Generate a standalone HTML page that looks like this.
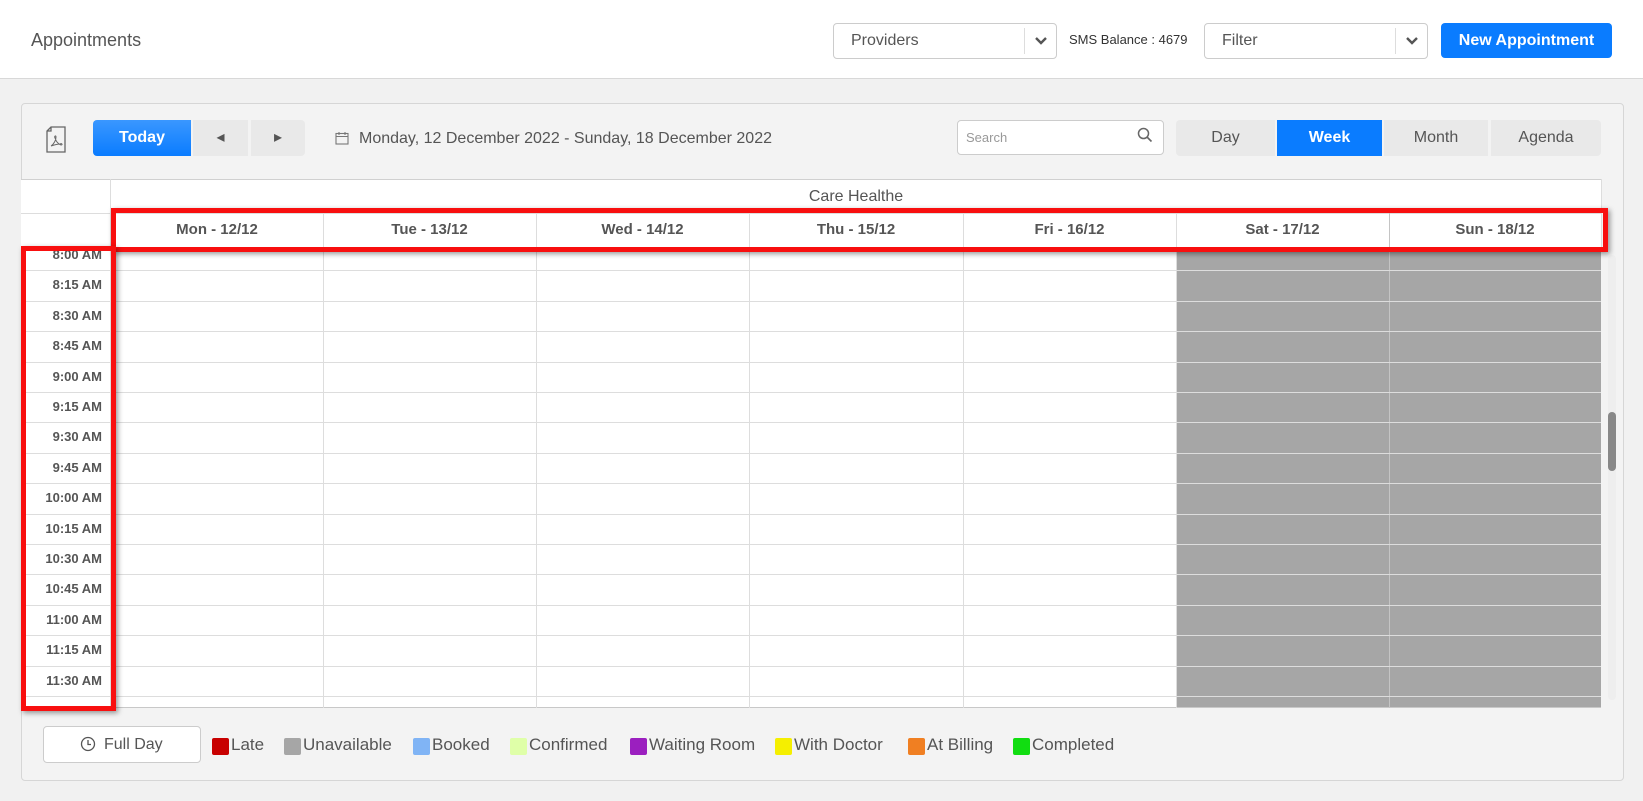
<!DOCTYPE html>
<html><head><meta charset="utf-8"><style>
*{box-sizing:border-box;margin:0;padding:0}
body{width:1643px;height:801px;overflow:hidden;background:#f1f1f1;font-family:"Liberation Sans",Arial,sans-serif;color:#555;position:relative}
.abs{position:absolute}
.hdr{left:0;top:0;width:1643px;height:79px;background:#fff;border-bottom:1px solid #d8d8d8}
.sel{background:#fff;border:1px solid #ccc;border-radius:4px;font-size:16px;color:#555;padding-left:17px;line-height:34px}
.sel .sep{position:absolute;top:4px;bottom:4px;width:1px;background:#ddd}
.btn{background:#e9e9e9;border-radius:3px;font-size:16px;text-align:center;line-height:36px;color:#555}
.tl{width:89px;text-align:right;padding-right:8px;font-weight:bold;font-size:13px;color:#555}
.dh{font-weight:bold;font-size:15px;color:#555;text-align:center;line-height:34px}
.lg{font-size:17px;color:#555;top:735px;line-height:20px}
.sq{width:17px;height:17px;border-radius:2px;top:738px}
</style></head><body>
<div class="abs hdr"></div>
<div class="abs" style="left:31px;top:30px;font-size:18px;color:#555">Appointments</div>
<div class="abs sel" style="left:833px;top:23px;width:224px;height:36px">Providers<div class="sep" style="left:190px"></div>
<svg class="abs" style="left:200px;top:12px" width="14" height="10" viewBox="0 0 14 10"><path d="M2 2l5 5 5-5" stroke="#555" stroke-width="2.4" fill="none"/></svg></div>
<div class="abs" style="left:1069px;top:32px;font-size:13px;color:#333">SMS Balance : 4679</div>
<div class="abs sel" style="left:1204px;top:23px;width:224px;height:36px">Filter<div class="sep" style="left:190px"></div>
<svg class="abs" style="left:200px;top:12px" width="14" height="10" viewBox="0 0 14 10"><path d="M2 2l5 5 5-5" stroke="#555" stroke-width="2.4" fill="none"/></svg></div>
<div class="abs" style="left:1441px;top:23px;width:171px;height:35px;background:#0a7cff;border-radius:4px;color:#fff;font-weight:bold;font-size:16px;text-align:center;line-height:35px">New Appointment</div>

<div class="abs" style="left:21px;top:103px;width:1603px;height:678px;background:#f3f3f3;border:1px solid #d6d6d6;border-radius:4px"></div>
<svg class="abs" style="left:45px;top:126px" width="22" height="27" viewBox="0 0 22 27"><path d="M6 1h14v25H2V5z M6 1v4H2" fill="none" stroke="#666" stroke-width="1.3"/><path d="M6 20c3-2 5-6 5-9 0-2-2-1-1 1 1 3 3 6 6 7 2 0 1-2-1-1-3 0-6 1-9 2" fill="none" stroke="#666" stroke-width="1"/></svg>
<div class="abs" style="left:93px;top:120px;width:98px;height:36px;background:linear-gradient(#3a97ff,#0a7cff);border-radius:4px 0 0 4px;color:#fff;font-weight:bold;font-size:16px;text-align:center;line-height:36px">Today</div>
<div class="abs btn" style="left:193px;top:120px;width:55px;height:36px;border-radius:0">◂</div>
<div class="abs btn" style="left:251px;top:120px;width:54px;height:36px;border-radius:0 4px 4px 0">▸</div>
<svg class="abs" style="left:335px;top:131px" width="14" height="14" viewBox="0 0 14 14"><rect x="1" y="2.5" width="12" height="10.5" fill="none" stroke="#777" stroke-width="1.1"/><path d="M1 5.5h12M4 1v3M10 1v3" stroke="#777" stroke-width="1.1"/></svg>
<div class="abs" style="left:359px;top:130px;font-size:16px;color:#555">Monday, 12 December 2022 - Sunday, 18 December 2022</div>
<div class="abs" style="left:957px;top:120px;width:207px;height:35px;background:#fff;border:1px solid #ccc;border-radius:4px;font-size:13px;color:#999;padding-left:8px;line-height:33px">Search</div>
<svg class="abs" style="left:1137px;top:127px" width="16" height="16" viewBox="0 0 16 16"><circle cx="6.5" cy="6.5" r="5" fill="none" stroke="#666" stroke-width="1.5"/><path d="M10 10l4.5 4.5" stroke="#666" stroke-width="1.6"/></svg>
<div class="abs btn" style="left:1176px;top:120px;width:99px;height:36px;border-radius:4px 0 0 4px">Day</div>
<div class="abs btn" style="left:1277px;top:120px;width:105px;height:36px;background:#0a7cff;color:#fff;font-weight:bold;border-radius:0">Week</div>
<div class="abs btn" style="left:1384px;top:120px;width:104px;height:36px;border-radius:0">Month</div>
<div class="abs btn" style="left:1491px;top:120px;width:110px;height:36px;border-radius:0 4px 4px 0">Agenda</div>

<div class="abs" style="left:21px;top:179px;width:1580px;height:529px;background:#fff;border-top:1px solid #d0d0d0;border-bottom:1px solid #c8c8c8"></div>
<div class="abs" style="left:110px;top:179px;width:1px;height:529px;background:#ddd"></div>
<div class="abs" style="left:1601px;top:179px;width:1px;height:69px;background:#ddd"></div>
<div class="abs" style="left:111px;top:213px;width:1490px;height:1px;background:#ddd"></div>
<div class="abs" style="left:21px;top:213px;width:90px;height:1px;background:#ddd"></div>
<div class="abs" style="left:111px;top:180px;width:1490px;text-align:center;font-size:16px;line-height:33px;color:#555">Care Healthe</div>

<div class="abs" style="left:1176px;top:248px;width:425px;height:459px;background:#a6a6a6"></div>
<div id="g"></div>
<div class="abs" style="left:1608px;top:255px;width:8px;height:445px;background:#eee;border-radius:4px"></div>
<div class="abs" style="left:1608px;top:412px;width:8px;height:59px;background:#888;border-radius:4px"></div>

<div class="abs" style="left:111px;top:208px;width:1497px;height:44px;border:5px solid #f80f0f;box-shadow:2px 2px 5px rgba(0,0,0,.4)"></div>
<div class="abs" style="left:21px;top:246px;width:95px;height:465px;border:5px solid #f80f0f;box-shadow:2px 2px 5px rgba(0,0,0,.4)"></div>

<div class="abs" style="left:43px;top:726px;width:158px;height:37px;background:#fff;border:1px solid #ccc;border-radius:4px;font-size:16px;line-height:35px;padding-left:60px;color:#555">Full Day</div>
<svg class="abs" style="left:80px;top:736px" width="16" height="16" viewBox="0 0 16 16"><circle cx="8" cy="8" r="6.5" fill="none" stroke="#555" stroke-width="1.3"/><path d="M8 4v4.5h3" fill="none" stroke="#555" stroke-width="1.3"/></svg>
<div class="abs sq" style="left:212px;background:#c80000"></div><div class="abs lg" style="left:231px">Late</div>
<div class="abs sq" style="left:284px;background:#a6a6a6"></div><div class="abs lg" style="left:303px">Unavailable</div>
<div class="abs sq" style="left:413px;background:#80b4f5"></div><div class="abs lg" style="left:432px">Booked</div>
<div class="abs sq" style="left:510px;background:#dfffa8"></div><div class="abs lg" style="left:529px">Confirmed</div>
<div class="abs sq" style="left:630px;background:#9b1fbf"></div><div class="abs lg" style="left:649px">Waiting Room</div>
<div class="abs sq" style="left:775px;background:#f5ef00"></div><div class="abs lg" style="left:794px">With Doctor</div>
<div class="abs sq" style="left:908px;background:#f07f22"></div><div class="abs lg" style="left:927px">At Billing</div>
<div class="abs sq" style="left:1013px;background:#11dd11"></div><div class="abs lg" style="left:1032px">Completed</div>
<script>
var g=document.getElementById('g'),h='';
var cols=[111,323,536,749,963,1176,1389,1601];
var days=['Mon - 12/12','Tue - 13/12','Wed - 14/12','Thu - 15/12','Fri - 16/12','Sat - 17/12','Sun - 18/12'];
for(var i=0;i<7;i++){h+='<div class="abs dh" style="left:'+cols[i]+'px;top:213px;width:'+(cols[i+1]-cols[i])+'px">'+days[i]+'</div>';
if(i>0)h+='<div class="abs" style="left:'+cols[i]+'px;top:213px;width:1px;height:495px;background:'+(i>=6?'#c4c4c4':'#ddd')+'"></div>';}
h+='<div class="abs" style="left:21px;top:248px;width:1580px;height:459px;overflow:hidden">';
var t=['8:00 AM','8:15 AM','8:30 AM','8:45 AM','9:00 AM','9:15 AM','9:30 AM','9:45 AM','10:00 AM','10:15 AM','10:30 AM','10:45 AM','11:00 AM','11:15 AM','11:30 AM','11:45 AM'];
for(var k=0;k<t.length;k++){var y=-8+k*30.4;
h+='<div class="abs tl" style="left:0;top:'+(y+7)+'px">'+t[k]+'</div>';
h+='<div class="abs" style="left:0;top:'+Math.round(y+30.4)+'px;width:1580px;height:1px;background:#ddd"></div>';}
h+='</div>';g.innerHTML=h;
</script>
</body></html>
